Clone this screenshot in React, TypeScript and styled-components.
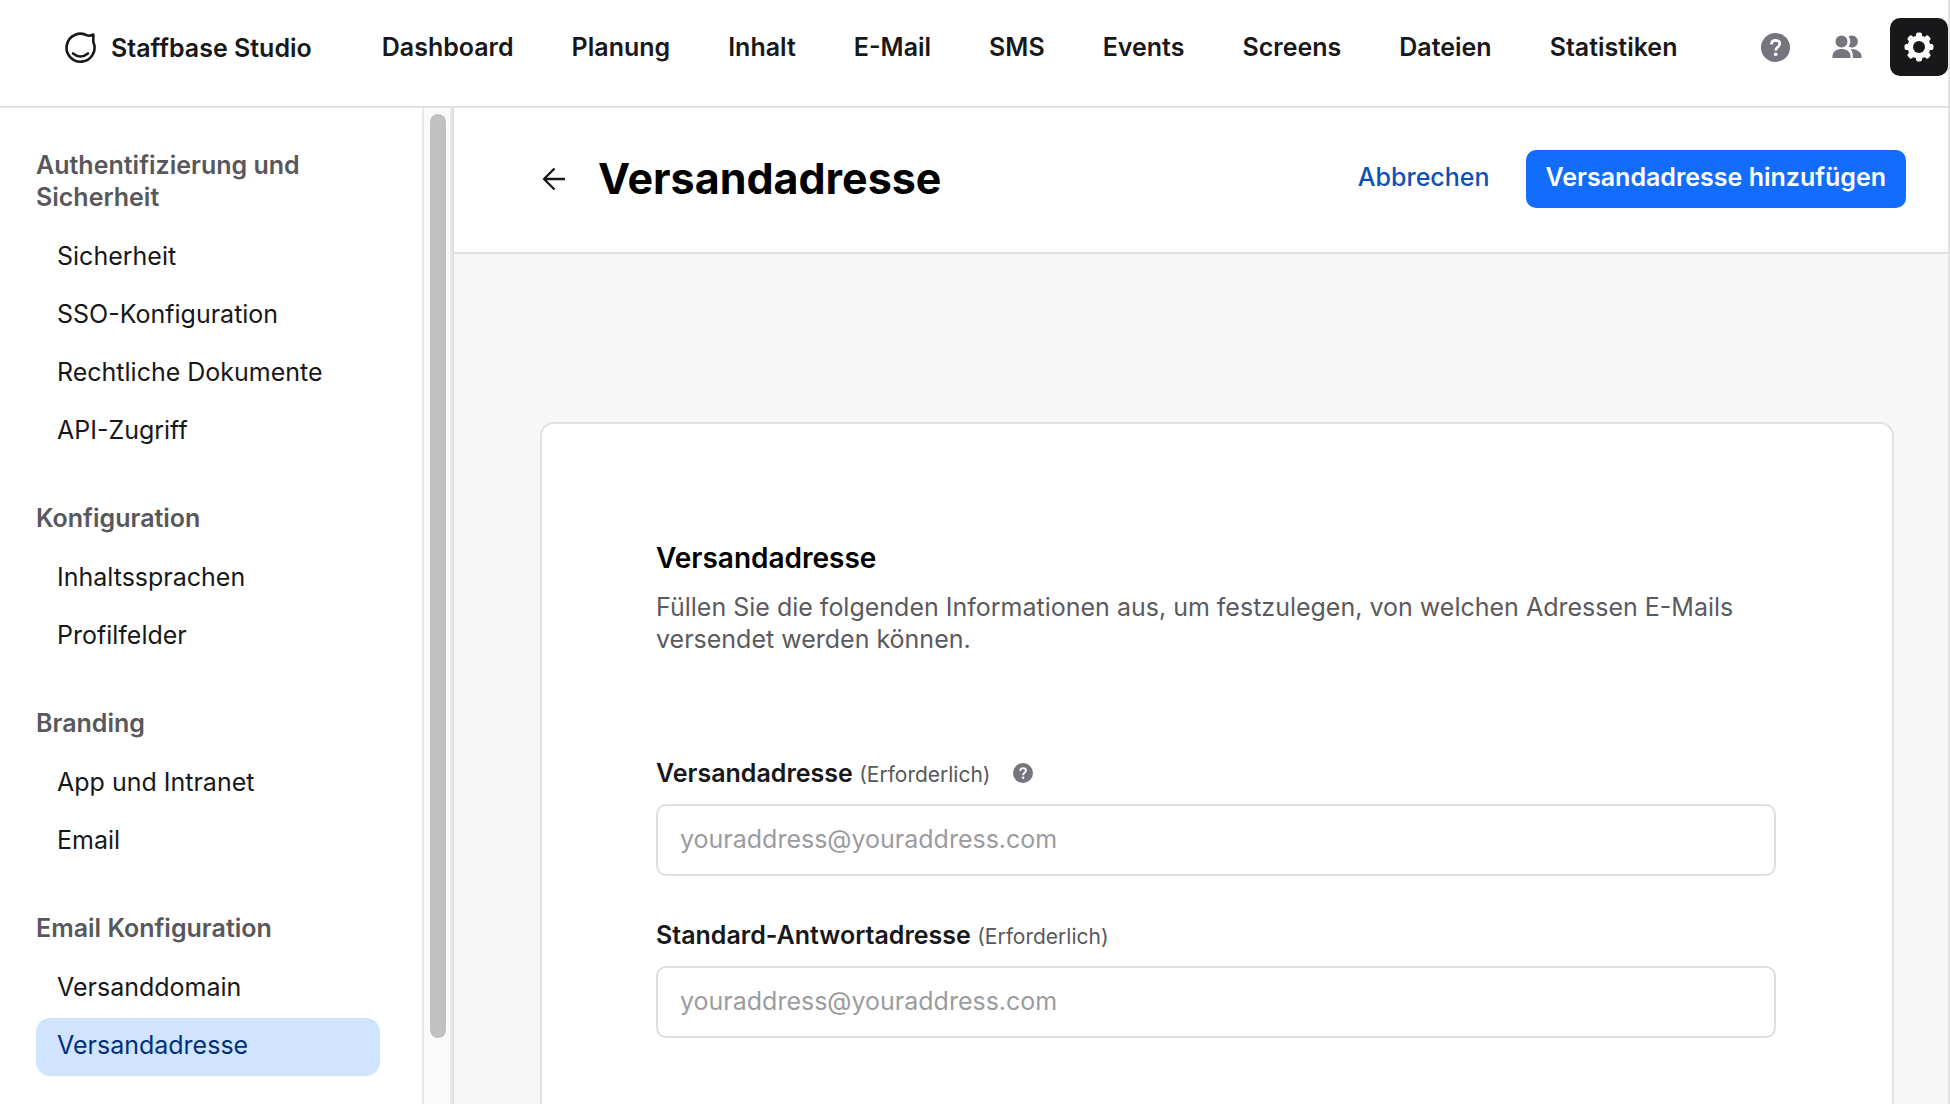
import React from "react";
import styled, { createGlobalStyle, css } from "styled-components";

const GlobalStyle = createGlobalStyle`
  *, *::before, *::after { box-sizing: border-box; }
  html, body, #root { height: 100%; }
  body {
    margin: 0;
    overflow: hidden;
    background: #ffffff;
    color: #18181a;
    font-family: Inter, "Liberation Sans", sans-serif;
    font-size: 25px;
    line-height: 32px;
  }
  button, input { font: inherit; color: inherit; }
`;

const Shell = styled.div`
  display: flex;
  flex-direction: column;
  height: 100vh;
  border-right: 2px solid #e2e2e2;
`;

const TopBar = styled.header`
  flex: none;
  display: flex;
  align-items: center;
  height: 108px;
  padding: 0 0 12px 64px;
  border-bottom: 2px solid #e0e0e0;
`;

const Brand = styled.a`
  display: flex;
  align-items: center;
  gap: 14px;
  margin-right: 70px;
  padding-top: 2px;
  color: inherit;
  font-weight: 600;
  text-decoration: none;
  white-space: nowrap;
`;

const MainNav = styled.nav`
  display: flex;
  gap: 58px;
`;

const NavLink = styled.a`
  color: inherit;
  font-weight: 600;
  text-decoration: none;
`;

const Tools = styled.div`
  display: flex;
  gap: 14px;
  margin-left: auto;
`;

const ToolButton = styled.button<{ $active?: boolean }>`
  display: grid;
  place-items: center;
  width: 58px;
  height: 58px;
  padding: 0;
  border: 0;
  border-radius: 10px;
  background: ${(p) => (p.$active ? "#18181a" : "transparent")};
  color: ${(p) => (p.$active ? "#ffffff" : "#75757d")};
`;

const Body = styled.div`
  flex: 1;
  display: flex;
  min-height: 0;
`;

const Sidebar = styled.aside`
  flex: none;
  display: flex;
  width: 454px;
  border-right: 2px solid #e0e0e0;
`;

const SideNav = styled.nav`
  flex: 1;
  display: flex;
  flex-direction: column;
  gap: 41px;
  padding: 41px 42px 0 36px;
`;

const SideTitle = styled.h2`
  margin: 0 0 16px;
  color: #58585c;
  font-size: 25px;
  font-weight: 600;
`;

const SideList = styled.ul`
  margin: 0;
  padding: 0;
  list-style: none;
`;

const SideLink = styled.a<{ $active?: boolean }>`
  display: block;
  height: 58px;
  padding: 11px 21px 15px;
  border-radius: 14px;
  color: inherit;
  text-decoration: none;
  white-space: nowrap;
  ${(p) =>
    p.$active &&
    css`
      background: #d0e3ff;
      color: #00317c;
    `}
`;

const ScrollTrack = styled.div`
  flex: none;
  width: 30px;
  padding: 6px 4px 66px 6px;
  border: solid #e8e8e8;
  border-width: 0 2px;
  background: #fafafa;
`;

const ScrollThumb = styled.div`
  width: 16px;
  height: 100%;
  border-radius: 8px;
  background: #c1c1c1;
`;

const Main = styled.main`
  flex: 1;
  display: flex;
  flex-direction: column;
  min-width: 0;
  background: #f7f7f7;
`;

const PageHead = styled.div`
  flex: none;
  display: flex;
  align-items: center;
  height: 146px;
  padding: 0 42px 2px 84px;
  border-bottom: 2px solid #e0e0e0;
  background: #ffffff;
`;

const BackButton = styled.button`
  display: grid;
  place-items: center;
  width: 32px;
  height: 32px;
  margin-right: 28px;
  padding: 0;
  border: 0;
  background: transparent;
`;

const PageTitle = styled.h1`
  flex: 1;
  margin: 0;
  padding-bottom: 2px;
  color: #000000;
  font-size: 43px;
  font-weight: 700;
  line-height: 54px;
`;

const TextButton = styled.button`
  height: 58px;
  margin-right: 14px;
  padding: 0 22px 4px;
  border: 0;
  background: transparent;
  color: #0e51b5;
  font-weight: 500;
`;

const PrimaryButton = styled.button`
  height: 58px;
  padding: 0 20px 4px;
  border: 0;
  border-radius: 10px;
  background: #126dff;
  color: #ffffff;
  font-weight: 600;
  white-space: nowrap;
`;

const Card = styled.section`
  flex: 1;
  margin: 168px 54px 0 86px;
  padding: 116px 116px 0 114px;
  border: 2px solid #e2e2e2;
  border-bottom: 0;
  border-radius: 14px 14px 0 0;
  background: #ffffff;
`;

const CardTitle = styled.h2`
  margin: 0 0 15px;
  color: #000000;
  font-size: 28px;
  font-weight: 600;
  line-height: 36px;
`;

const Intro = styled.p`
  margin: 0 0 102px;
  color: #5a5a5e;
`;

const Field = styled.div`
  margin-bottom: 43px;
`;

const FieldHead = styled.div`
  display: flex;
  align-items: center;
  gap: 22px;
  height: 32px;
  margin-bottom: 15px;
`;

const Label = styled.label`
  font-weight: 600;
`;

const Required = styled.span`
  color: #58585c;
  font-size: 21px;
  font-weight: 400;
  line-height: 21px;
`;

const HelpButton = styled.button`
  display: grid;
  place-items: center;
  padding: 0;
  border: 0;
  background: transparent;
  color: #75757d;
`;

const TextInput = styled.input`
  display: block;
  width: 100%;
  height: 72px;
  padding: 0 22px 2px;
  border: 2px solid #dfdfdf;
  border-radius: 10px;
  background: #ffffff;
  &::placeholder {
    color: #9b9ba0;
    opacity: 1;
  }
`;

const LogoIcon = () => (
  <svg width="33" height="34" viewBox="0 0 33 34" fill="none" stroke="#18181a" strokeWidth="2.600" aria-hidden="true">
    <path d="M23.500 4.600A14 14 0 1 0 29.300 11V3.500Q26.500 5 23.500 4.600" strokeLinejoin="round" />
    <path d="M9 22.500Q16.500 28.500 24 22.500" strokeLinecap="round" />
  </svg>
);

const HelpIcon = ({ size }: { size: number }) => (
  <svg width={size} height={size} viewBox="0 0 30 30" aria-hidden="true">
    <circle cx="15" cy="15" r="15" fill="currentColor" />
    <path
      d="M10.800 11.800C10.900 9 12.600 7.600 15.100 7.600C17.700 7.600 19.400 9.200 19.400 11.300C19.400 13.200 18.200 14 17 14.900C15.700 15.900 15.200 16.500 15.200 18.200"
      fill="none"
      stroke="#ffffff"
      strokeWidth="2.800"
    />
    <circle cx="15.200" cy="22" r="1.900" fill="#ffffff" />
  </svg>
);

const PeopleIcon = () => (
  <svg width="30" height="24" viewBox="0 0 30 24" fill="currentColor" aria-hidden="true">
    <circle cx="9.500" cy="6.500" r="6" />
    <path d="M0.500 23V21C0.500 16.500 5 14 9.500 14S18.500 16.500 18.500 21V23Z" />
    <path d="M16.500 11.400A7.500 7.500 0 0 0 16.500 1.500A6 6 0 1 1 16.500 11.400Z" />
    <path d="M18.500 14C23.500 13.700 29.500 16.500 29.500 21V23H20.800V20.500C20.800 17.800 20 15.800 18.500 14Z" />
  </svg>
);

const GEAR_ANGLES = [0, 45, 90, 135];

const GearIcon = () => (
  <svg width="30" height="30" viewBox="0 0 30 30" aria-hidden="true">
    {GEAR_ANGLES.map((a) => (
      <rect key={a} x="12" y="0.500" width="6" height="29" rx="2" fill="#ffffff" transform={`rotate(${a} 15 15)`} />
    ))}
    <circle cx="15" cy="15" r="11.500" fill="#ffffff" />
    <circle cx="15" cy="15" r="6" fill="#18181a" />
  </svg>
);

const ArrowIcon = () => (
  <svg width="24" height="24" viewBox="0 0 24 24" fill="none" stroke="#18181a" strokeWidth="2.400" aria-hidden="true">
    <path d="M23 12H2.500M12.500 1.500L2 12L12.500 22.500" strokeLinejoin="round" />
  </svg>
);

const NAV = ["Dashboard", "Planung", "Inhalt", "E-Mail", "SMS", "Events", "Screens", "Dateien", "Statistiken"];

const SECTIONS = [
  { title: "Authentifizierung und Sicherheit", items: ["Sicherheit", "SSO-Konfiguration", "Rechtliche Dokumente", "API-Zugriff"] },
  { title: "Konfiguration", items: ["Inhaltssprachen", "Profilfelder"] },
  { title: "Branding", items: ["App und Intranet", "Email"] },
  { title: "Email Konfiguration", items: ["Versanddomain", "Versandadresse"] },
];

const FIELDS = [
  { id: "sender", label: "Versandadresse", help: true },
  { id: "reply-to", label: "Standard-Antwortadresse", help: false },
];

export default function App() {
  return (
    <>
      <GlobalStyle />
      <Shell>
        <TopBar>
          <Brand href="#">
            <LogoIcon />
            Staffbase Studio
          </Brand>
          <MainNav>
            {NAV.map((item) => (
              <NavLink key={item} href="#">{item}</NavLink>
            ))}
          </MainNav>
          <Tools>
            <ToolButton type="button" aria-label="Hilfe"><HelpIcon size={29} /></ToolButton>
            <ToolButton type="button" aria-label="Nutzer"><PeopleIcon /></ToolButton>
            <ToolButton type="button" aria-label="Einstellungen" $active><GearIcon /></ToolButton>
          </Tools>
        </TopBar>
        <Body>
          <Sidebar>
            <SideNav>
              {SECTIONS.map((section) => (
                <div key={section.title}>
                  <SideTitle>{section.title}</SideTitle>
                  <SideList>
                    {section.items.map((item) => (
                      <li key={item}>
                        <SideLink href="#" $active={item === "Versandadresse"}>{item}</SideLink>
                      </li>
                    ))}
                  </SideList>
                </div>
              ))}
            </SideNav>
            <ScrollTrack>
              <ScrollThumb />
            </ScrollTrack>
          </Sidebar>
          <Main>
            <PageHead>
              <BackButton type="button" aria-label="Zurück"><ArrowIcon /></BackButton>
              <PageTitle>Versandadresse</PageTitle>
              <TextButton type="button">Abbrechen</TextButton>
              <PrimaryButton type="button">Versandadresse hinzufügen</PrimaryButton>
            </PageHead>
            <Card>
              <CardTitle>Versandadresse</CardTitle>
              <Intro>
                Füllen Sie die folgenden Informationen aus, um festzulegen, von welchen Adressen E-Mails versendet werden können.
              </Intro>
              {FIELDS.map((field) => (
                <Field key={field.id}>
                  <FieldHead>
                    <Label htmlFor={field.id}>
                      {field.label} <Required>(Erforderlich)</Required>
                    </Label>
                    {field.help && (
                      <HelpButton type="button" aria-label="Hilfe zur Versandadresse"><HelpIcon size={20} /></HelpButton>
                    )}
                  </FieldHead>
                  <TextInput id={field.id} type="email" placeholder="youraddress@youraddress.com" />
                </Field>
              ))}
            </Card>
          </Main>
        </Body>
      </Shell>
    </>
  );
}
